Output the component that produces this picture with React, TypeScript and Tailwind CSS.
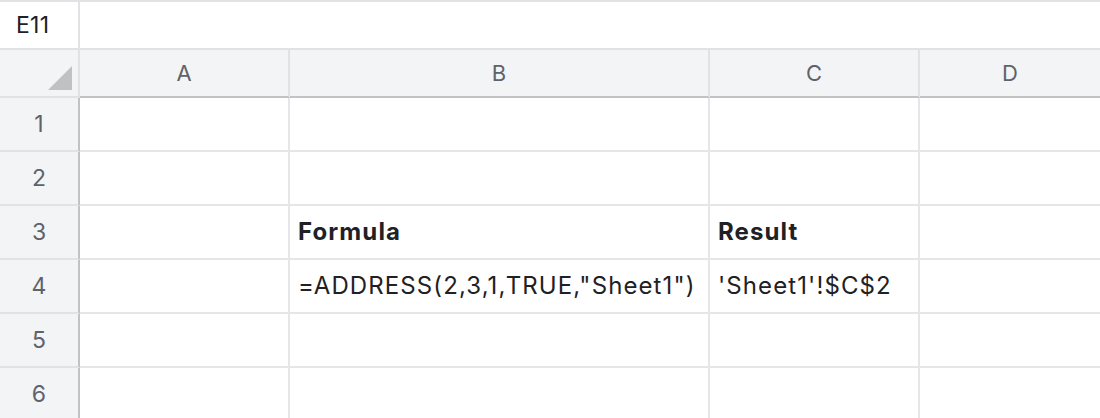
import React from "react";

const cols = ["A", "B", "C", "D"];
const colW = ["w-[210px]", "w-[420px]", "w-[210px]", "flex-1"];

const rows: Record<number, string[]> = {
  3: ["", "Formula", "Result", ""],
  4: ["", '=ADDRESS(2,3,1,TRUE,"Sheet1")', "'Sheet1'!$C$2", ""],
};

export default function App() {
  return (
    <div
      className="w-[1100px] h-[418px] overflow-hidden bg-white text-[#1f2124]"
      style={{ fontFamily: "Inter, 'Noto Sans', sans-serif" }}
    >
      {/* formula bar */}
      <div className="flex h-[50px] border-t-2 border-b-2 border-[#e1e2e5]">
        <div className="w-[80px] border-r-2 border-[#e1e2e5] flex items-center pl-[16px] text-[23px] tracking-[0.3px]">
          E11
        </div>
        <div className="flex-1" />
      </div>
      {/* header row */}
      <div className="flex h-[48px] bg-[#f3f4f6]">
        <div className="w-[80px] relative border-r-2 border-b-2 border-[#e1e2e5] flex items-end justify-end pr-[6px] pb-[6px]">
          <svg width="24" height="24" viewBox="0 0 24 24">
            <polygon points="24,0 24,24 0,24" fill="#bfc1c5" />
          </svg>
        </div>
        {cols.map((c, i) => (
          <div
            key={c}
            className={`${colW[i]} ${i < 3 ? "border-r-2" : ""} border-b-2 border-r-[#e1e2e5] border-b-[#c0c2c6] flex items-center justify-center text-[22px] text-[#5f6369]`}
          >
            {c}
          </div>
        ))}
      </div>
      {[1, 2, 3, 4, 5, 6].map((r) => (
        <div key={r} className="flex h-[54px]">
          <div className="w-[80px] bg-[#f3f4f6] border-r-2 border-b-2 border-r-[#c0c2c6] border-b-[#e1e2e5] flex items-center justify-center text-[23px] text-[#5f6369]">
            {r}
          </div>
          {cols.map((c, i) => (
            <div
              key={c}
              className={`${colW[i]} ${i < 3 ? "border-r-2" : ""} border-b-2 border-[#e6e6e8] flex items-center pl-[8px] text-[24px] tracking-[1.1px] whitespace-nowrap ${r === 3 ? "font-bold" : ""}`}
            >
              {rows[r]?.[i] ?? ""}
            </div>
          ))}
        </div>
      ))}
    </div>
  );
}
